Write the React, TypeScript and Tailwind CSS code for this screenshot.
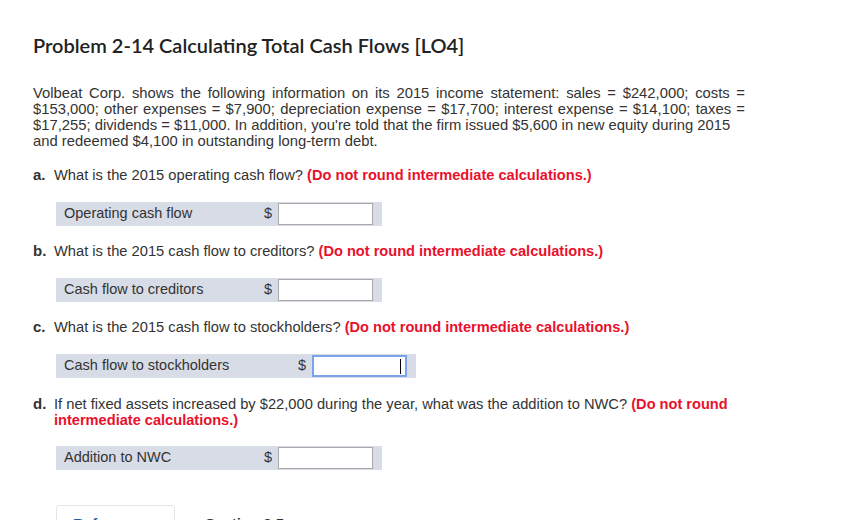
const body = "font-['Liberation_Sans',Arial,sans-serif]";

function AnswerRow({ label, width, focused }: { label: string; width: string; focused?: boolean }) {
  return (
    <div className={`ml-[23px] flex h-6 items-center bg-[#d8dce6] pr-[9px] text-[14.5px] text-[#333] ${width}`}>
      <span className="flex-1 pl-2 whitespace-nowrap">{label}</span>
      <span className="mr-[6px]">$</span>
      <div
        className={`relative h-[22px] w-[95px] bg-white ${
          focused ? "border-2 border-[#7aa3ea]" : "border border-[#a9a9a9]"
        }`}
      >
        {focused && <div className="absolute right-[4px] top-[2px] h-[15px] w-px bg-black"></div>}
      </div>
    </div>
  );
}

function Question({ letter, children }: { letter: string; children: React.ReactNode }) {
  return (
    <div className="flex text-[14.7px] leading-4 text-[#333]">
      <span className="w-[21px] shrink-0 text-[15px] font-bold">{letter}</span>
      <p className="w-[691px]">{children}</p>
    </div>
  );
}

function Note({ children }: { children: React.ReactNode }) {
  return <span className="text-[14.6px] font-bold text-[#e8112d]">{children}</span>;
}

export default function App() {
  return (
    <div className={`min-h-screen bg-white pl-[33px] pt-[33px] ${body}`}>
      <h1 className="font-['Lato',sans-serif] text-[20px] font-semibold leading-6 text-[#222]">
        Problem 2-14 Calculating Total Cash Flows [LO4]
      </h1>

      <div className="mt-[28px] w-[712px] text-[14.8px] leading-4 text-[#333]">
        <span className="block whitespace-nowrap text-justify [text-align-last:justify]">
          Volbeat Corp. shows the following information on its 2015 income statement: sales = $242,000; costs =
        </span>
        <span className="block whitespace-nowrap text-justify [text-align-last:justify]">
          $153,000; other expenses = $7,900; depreciation expense = $17,700; interest expense = $14,100; taxes =
        </span>
        <span className="block whitespace-nowrap">
          $17,255; dividends = $11,000. In addition, you're told that the firm issued $5,600 in new equity during 2015
        </span>
        <span className="block whitespace-nowrap">and redeemed $4,100 in outstanding long-term debt.</span>
      </div>

      <div className="mt-[18px]">
        <Question letter="a.">
          What is the 2015 operating cash flow? <Note>(Do not round intermediate calculations.)</Note>
        </Question>
        <div className="mt-[19px]">
          <AnswerRow label="Operating cash flow" width="w-[326px]" />
        </div>
      </div>

      <div className="mt-[17px]">
        <Question letter="b.">
          What is the 2015 cash flow to creditors? <Note>(Do not round intermediate calculations.)</Note>
        </Question>
        <div className="mt-[19px]">
          <AnswerRow label="Cash flow to creditors" width="w-[326px]" />
        </div>
      </div>

      <div className="mt-[17px]">
        <Question letter="c.">
          What is the 2015 cash flow to stockholders? <Note>(Do not round intermediate calculations.)</Note>
        </Question>
        <div className="mt-[19px]">
          <AnswerRow label="Cash flow to stockholders" width="w-[360px]" focused />
        </div>
      </div>

      <div className="mt-[18px]">
        <Question letter="d.">
          If net fixed assets increased by $22,000 during the year, what was the addition to NWC?{" "}
          <Note>(Do not round intermediate calculations.)</Note>
        </Question>
        <div className="mt-[18px]">
          <AnswerRow label="Addition to NWC" width="w-[326px]" />
        </div>
      </div>

      <div className="ml-[23px] mt-[35px] flex items-start gap-[30px]">
        <div className="w-[119px] rounded-[3px] border border-[#e5e5e5] px-4 pt-[8px] pb-3 leading-5">
          <span className="text-[15px] font-bold text-[#2a5e9f]">References</span>
        </div>
        <span className="pt-[9px] text-[15px] font-bold leading-5 text-[#333]">Section 2.5</span>
      </div>
    </div>
  );
}
